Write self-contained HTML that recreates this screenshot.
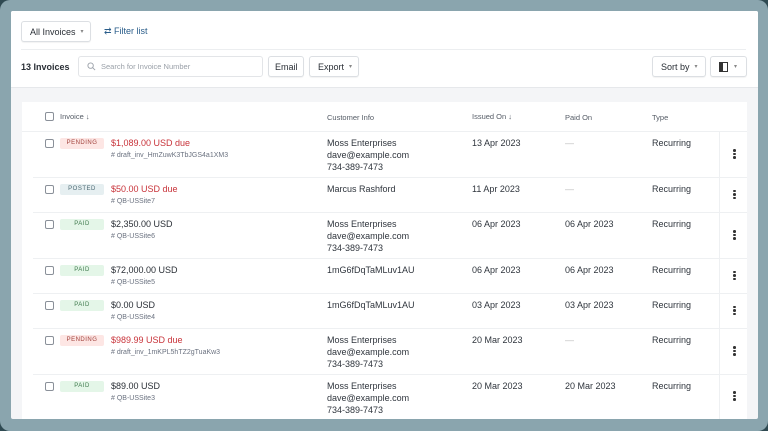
<!DOCTYPE html>
<html><head><meta charset="utf-8"><style>
*{box-sizing:border-box;margin:0;padding:0}
body{width:768px;height:431px;overflow:hidden;background:#2f4a52;font-family:"Liberation Sans",sans-serif;color:#2a2f36;position:relative}
.frame{position:absolute;left:0;top:0;width:768px;height:431px;background:#8aa5ae;border-radius:10px}
.panel{position:absolute;left:11px;top:11px;width:747px;height:408px;background:#f4f5f7;overflow:hidden;border-radius:2px}
.top{position:absolute;left:0;top:0;width:747px;height:77px;background:#fff;border-bottom:1px solid #e6e8eb}
.a{position:absolute;white-space:nowrap}
.btn{position:absolute;border:1px solid #dcdfe3;border-radius:3px;background:#fff;font-size:9px;display:flex;align-items:center;padding-left:8px;box-shadow:0 1px 1px rgba(0,0,0,.05)}
.card{position:absolute;left:11px;top:91px;width:725px;height:330px;background:#fff}
.hdr{font-size:7.5px;color:#555c66}
.cb{position:absolute;width:9px;height:9px;border:1px solid #8a9099;border-radius:2px;background:#fff}
.badge{position:absolute;width:44px;height:11px;border-radius:2px;font-size:6px;letter-spacing:.5px;text-align:center;line-height:11px}
.pend{background:#fde6e4;color:#a0403a}.post{background:#e6eff1;color:#4d6a74}.paid{background:#e4f6e8;color:#3f7a4d}
.amt{font-size:9px}.red{color:#c8333a}
.sub{font-size:7px;color:#6b7280}
.t{font-size:9px;color:#2f353d}
.dots{position:absolute;width:3px}
.dots i{display:block;width:2.5px;height:2.5px;background:#333;border-radius:50%;margin-bottom:1.2px}
</style></head><body>
<div class="frame"></div>
<div class="panel">
 <div class="top">
  <div class="btn" style="left:10px;top:10px;width:70px;height:21px">All Invoices <span style="font-size:6px;color:#888;margin-left:5px">▾</span></div>
  <div class="a" style="left:93px;top:15px;font-size:9px;color:#2a5d8a"><span style="font-size:9px">⇄</span> Filter list</div>
  <div style="position:absolute;left:10px;top:38px;width:725px;height:1px;background:#eceef0"></div>
  <div class="a" style="left:10px;top:51px;font-size:9px;font-weight:bold">13 Invoices</div>
  <div class="btn" style="left:67px;top:45px;width:185px;height:21px;color:#9aa0a8;font-size:7.5px;box-shadow:none;border-color:#e3e5e8">
   <svg width="9" height="9" viewBox="0 0 10 10" style="margin-right:5px"><circle cx="4" cy="4" r="3" fill="none" stroke="#9aa0a8" stroke-width="1"/><path d="M6.3 6.3L9 9" stroke="#9aa0a8"/></svg>Search for Invoice Number</div>
  <div class="btn" style="left:257px;top:45px;width:36px;height:21px;padding-left:6px">Email</div>
  <div class="btn" style="left:298px;top:45px;width:50px;height:21px">Export <span style="font-size:6px;color:#888;margin-left:5px">▾</span></div>
  <div class="btn" style="left:641px;top:45px;width:54px;height:21px">Sort by <span style="font-size:6px;color:#888;margin-left:5px">▾</span></div>
  <div class="btn" style="left:699px;top:45px;width:37px;height:21px"><span style="display:inline-block;width:9px;height:10px;border:1px solid #333;border-left:4px solid #333"></span><span style="font-size:6px;color:#888;margin-left:6px">▾</span></div>
 </div>
 <div class="card"></div>
</div>
<div class="cb" style="left:45px;top:112px"></div>
<div class="a hdr" style="left:60px;top:112px">Invoice ↓</div>
<div class="a hdr" style="left:327px;top:113px">Customer Info</div>
<div class="a hdr" style="left:472px;top:112px">Issued On ↓</div>
<div class="a hdr" style="left:565px;top:113px">Paid On</div>
<div class="a hdr" style="left:652px;top:113px">Type</div>
<div style="position:absolute;left:22px;top:131px;width:725px;height:1px;background:#eef0f2"></div>
<div style="position:absolute;left:719px;top:131px;width:1px;height:288px;background:#eef0f2"></div>
<div id="rows"></div>
<script>
var R=[[131,'pend','PENDING','$1,089.00 USD due','draft_inv_HmZuwK3TbJGS4a1XM3',['Moss Enterprises','dave@example.com','734-389-7473'],'13 Apr 2023','—'],
[177,'post','POSTED','$50.00 USD due','QB-USSite7',['Marcus Rashford'],'11 Apr 2023','—'],
[212,'paid','PAID','$2,350.00 USD','QB-USSite6',['Moss Enterprises','dave@example.com','734-389-7473'],'06 Apr 2023','06 Apr 2023'],
[258,'paid','PAID','$72,000.00 USD','QB-USSite5',['1mG6fDqTaMLuv1AU'],'06 Apr 2023','06 Apr 2023'],
[293,'paid','PAID','$0.00 USD','QB-USSite4',['1mG6fDqTaMLuv1AU'],'03 Apr 2023','03 Apr 2023'],
[328,'pend','PENDING','$989.99 USD due','draft_inv_1mKPL5hTZ2gTuaKw3',['Moss Enterprises','dave@example.com','734-389-7473'],'20 Mar 2023','—'],
[374,'paid','PAID','$89.00 USD','QB-USSite3',['Moss Enterprises','dave@example.com','734-389-7473'],'20 Mar 2023','20 Mar 2023']];
var h='';
R.forEach(function(r,i){var y=r[0];
 if(i>0)h+='<div style="position:absolute;left:33px;top:'+y+'px;width:714px;height:1px;background:#eef0f2"></div>';
 var nxt=i<6?R[i+1][0]:418;
 h+='<div class="cb" style="left:45px;top:'+(y+8)+'px"></div>';
 h+='<div class="badge '+r[1]+'" style="left:60px;top:'+(y+7)+'px">'+r[2]+'</div>';
 h+='<div class="a amt'+(r[3].indexOf('due')>0?' red':'')+'" style="left:111px;top:'+(y+7)+'px">'+r[3]+'</div>';
 h+='<div class="a sub" style="left:111px;top:'+(y+21)+'px"># '+r[4]+'</div>';
 r[5].forEach(function(c,j){h+='<div class="a t" style="left:327px;top:'+(y+7+j*12)+'px">'+c+'</div>';});
 h+='<div class="a t" style="left:472px;top:'+(y+7)+'px">'+r[6]+'</div>';
 h+='<div class="a t" style="left:565px;top:'+(y+7)+'px;'+(r[7]=='—'?'color:#bbb':'')+'">'+r[7]+'</div>';
 h+='<div class="a t" style="left:652px;top:'+(y+7)+'px">Recurring</div>';
 h+='<div class="dots" style="left:733px;top:'+(y+(nxt-y)/2-5)+'px"><i></i><i></i><i></i></div>';
});
document.getElementById('rows').innerHTML=h;
</script>
</body></html>
